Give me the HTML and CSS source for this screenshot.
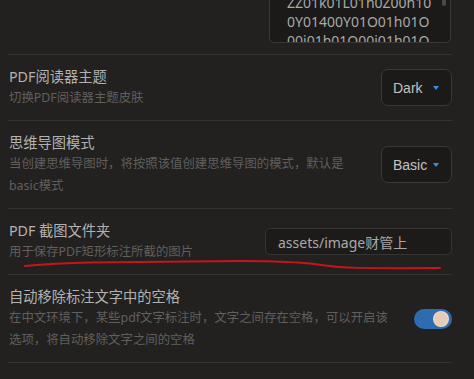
FILE: index.html
```html
<!DOCTYPE html>
<html lang="zh">
<head>
<meta charset="utf-8">
<link rel="stylesheet" href="styles.css">
</head>
<body>
<div class="settings">
  <div class="item item-first">
    <div class="info"></div>
    <div class="control">
      <div class="textarea">
        <div class="lines">
          <div>00i01h01O00i01h01O</div>
          <div>0Y01400Y01O01h01O</div>
          <div>ZZ01k01L01h0Z00h10</div>
          <div>0Y01400Y01O01h01O</div>
          <div>00i01h01O00i01h01O</div>
        </div>
        <div class="thumb"></div>
      </div>
    </div>
  </div>

  <div class="item">
    <div class="info">
      <div class="title">PDF阅读器主题</div>
      <div class="desc">切换PDF阅读器主题皮肤</div>
    </div>
    <div class="control">
      <div class="select"><span>Dark</span><span class="arrow"></span></div>
    </div>
  </div>

  <div class="item">
    <div class="info">
      <div class="title">思维导图模式</div>
      <div class="desc">当创建思维导图时，将按照该值创建思维导图的模式，默认是basic模式</div>
    </div>
    <div class="control">
      <div class="select"><span>Basic</span><span class="arrow"></span></div>
    </div>
  </div>

  <div class="item">
    <div class="info">
      <div class="title">PDF 截图文件夹</div>
      <div class="desc">用于保存PDF矩形标注所截的图片</div>
    </div>
    <div class="control">
      <div class="input">assets/image财管上</div>
    </div>
  </div>

  <div class="item">
    <div class="info">
      <div class="title">自动移除标注文字中的空格</div>
      <div class="desc">在中文环境下，某些pdf文字标注时，文字之间存在空格，可以开启该选项，将自动移除文字之间的空格</div>
    </div>
    <div class="control">
      <div class="toggle"><span class="knob"></span></div>
    </div>
  </div>
  <div class="item item-last"></div>
</div>
<svg class="scribble" width="474" height="379" viewBox="0 0 474 379">
  <path d="M25 266 C 45 264, 60 263, 90 262.5 C 150 262, 200 261, 240 261 C 280 261, 305 262, 325 265.5 C 340 268, 360 268.5, 440 268" fill="none" stroke="#c9141c" stroke-width="2" stroke-linecap="round"/>
</svg>
</body>
</html>
```

FILE: styles.css
```css
html, body {
  margin: 0;
  padding: 0;
  background: #222120;
  overflow: hidden;
}
body {
  width: 474px;
  height: 379px;
  position: relative;
  font-family: "Noto Sans", "Noto Sans CJK SC", sans-serif;
}
.settings {
  margin: -68px 22px 0 8px;
}
.item {
  display: flex;
  align-items: center;
  border-top: 1px solid #343332;
  padding: 11px 0;
}
.item-first {
  border-top: none;
}
.item-last {
  padding: 0;
}
.info {
  flex: 1 1 auto;
  margin-right: 14px;
  padding-left: 1px;
}
.control {
  flex: 0 0 auto;
  display: flex;
  justify-content: flex-end;
}
.title {
  font-size: 14.25px;
  line-height: 21px;
  color: #b3b2b1;
}
.desc {
  font-size: 12.4px;
  line-height: 22px;
  color: #605f5e;
}
.textarea {
  position: relative;
  width: 180px;
  height: 98px;
  border: 1px solid #393837;
  border-radius: 5px;
  background: #1b1a19;
  overflow: hidden;
  box-sizing: content-box;
  margin-right: 1px;
}
.lines {
  padding: 10.5px 0 0 17px;
  font-size: 14px;
  line-height: 19px;
  color: #a9a8a7;
}
.thumb {
  position: absolute;
  right: 4px;
  top: 0;
  width: 4px;
  height: 62px;
  border-radius: 2px;
  background: #4a4948;
}
.select {
  width: 71px;
  height: 37px;
  box-sizing: border-box;
  border: 1px solid #393837;
  border-radius: 7px;
  background: #1b1a19;
  display: flex;
  align-items: center;
  justify-content: space-between;
  padding: 0 12px 0 11px;
  font-family: "Liberation Sans", "Noto Sans", sans-serif;
  font-size: 14px;
  color: #c3c2c1;
}
.arrow {
  width: 0;
  height: 0;
  border-left: 3.5px solid transparent;
  border-right: 3.5px solid transparent;
  border-top: 4px solid #3b8ee4;
}
.input {
  width: 187px;
  height: 27px;
  box-sizing: border-box;
  border: 1px solid #353433;
  border-radius: 5px;
  background: #1c1b1a;
  padding: 0 12px;
  display: flex;
  align-items: center;
  font-size: 14px;
  color: #aaa9a8;
}
.toggle {
  width: 38px;
  height: 20px;
  border-radius: 10px;
  background: #2d6cb0;
  display: flex;
  align-items: center;
  justify-content: flex-end;
  padding-right: 4px;
  box-sizing: border-box;
}
.knob {
  width: 14px;
  height: 14px;
  border-radius: 50%;
  background: #e6ccb7;
  box-shadow: 0 0 0 1px #f0dccd;
}
.scribble {
  position: absolute;
  left: 0;
  top: 0;
  pointer-events: none;
}
```
